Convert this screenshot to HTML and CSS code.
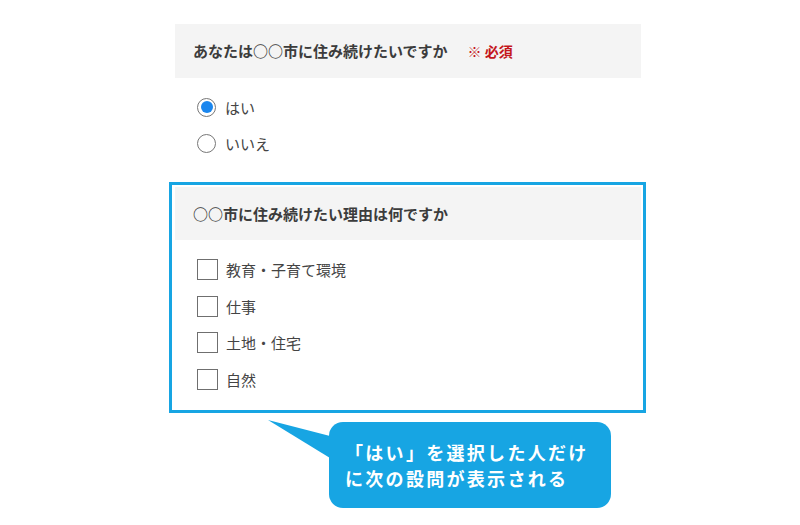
FILE: index.html
```html
<!DOCTYPE html>
<html lang="ja">
<head>
<meta charset="utf-8">
<link rel="stylesheet" href="styles.css">
</head>
<body>
<div class="page">
  <section class="q">
    <div class="q-head">あなたは○○市に住み続けたいですか<span class="req">※ 必須</span></div>
    <ul class="opts radios">
      <li class="opt"><span class="radio on"></span>はい</li>
      <li class="opt"><span class="radio"></span>いいえ</li>
    </ul>
  </section>
  <section class="q2">
    <div class="q-head">○○市に住み続けたい理由は何ですか</div>
    <ul class="opts checks">
      <li class="opt"><span class="check"></span>教育・子育て環境</li>
      <li class="opt"><span class="check"></span>仕事</li>
      <li class="opt"><span class="check"></span>土地・住宅</li>
      <li class="opt"><span class="check"></span>自然</li>
    </ul>
  </section>
  <div class="callout">
    <svg class="tail" width="62" height="40" viewBox="0 0 62 40"><polygon points="0,0 62,16 62,38" fill="#17a5e3"/></svg>
    <div class="callout-line">「はい」を選択した人だけ</div>
    <div class="callout-line">に次の設問が表示される</div>
  </div>
</div>
</body>
</html>
```
FILE: styles.css
```css
* { box-sizing: border-box; }
html, body { margin: 0; padding: 0; background: #fff; }
body {
  font-family: "Noto Sans CJK JP", "Noto Sans", sans-serif;
  color: #444;
}
.page {
  width: 800px;
  height: 525px;
  padding: 24px 0 0 175px;
}
.q { width: 466px; }
.q-head {
  background: #f4f4f4;
  height: 54px;
  line-height: 54px;
  padding-left: 18px;
  font-size: 15px;
  font-weight: 700;
  color: #3c3c3c;
  white-space: nowrap;
}
.req {
  color: #c4161c;
  font-size: 14px;
  margin-left: 20px;
}
.opts {
  list-style: none;
  margin: 0;
  padding: 0 0 0 22px;
}
.opt {
  display: flex;
  align-items: center;
  font-size: 15px;
  color: #444;
}
.radios { margin-top: 11px; }
.radios .opt { height: 36px; }
.radio {
  width: 19px;
  height: 19px;
  border: 1.5px solid #777;
  border-radius: 50%;
  margin-right: 9px;
  background: #fff;
  display: flex;
  align-items: center;
  justify-content: center;
}
.radio.on::after {
  content: "";
  width: 12px;
  height: 12px;
  border-radius: 50%;
  background: #1a86ee;
}
.q2 {
  width: 477px;
  margin: 21px 0 0 -6px;
  border: 3px solid #17a5e3;
  padding: 2px 2px 12px 3px;
}
.q2 .q-head {
  height: 53px;
  line-height: 53px;
}
.checks { margin-top: 11px; }
.checks .opt { height: 36.7px; }
.check {
  width: 21px;
  height: 21px;
  border: 1.5px solid #6f6f6f;
  margin-right: 8px;
  background: #fff;
}
.callout {
  position: relative;
  width: 282px;
  height: 86px;
  margin: 9px 0 0 154px;
  background: #17a5e3;
  border-radius: 14px;
  padding: 17px 0 0 16px;
}
.tail {
  position: absolute;
  left: -61px;
  top: -2px;
}
.callout-line {
  height: 26px;
  line-height: 26px;
  color: #fff;
  font-size: 18px;
  font-weight: 700;
  letter-spacing: 2.3px;
  white-space: nowrap;
}
```
